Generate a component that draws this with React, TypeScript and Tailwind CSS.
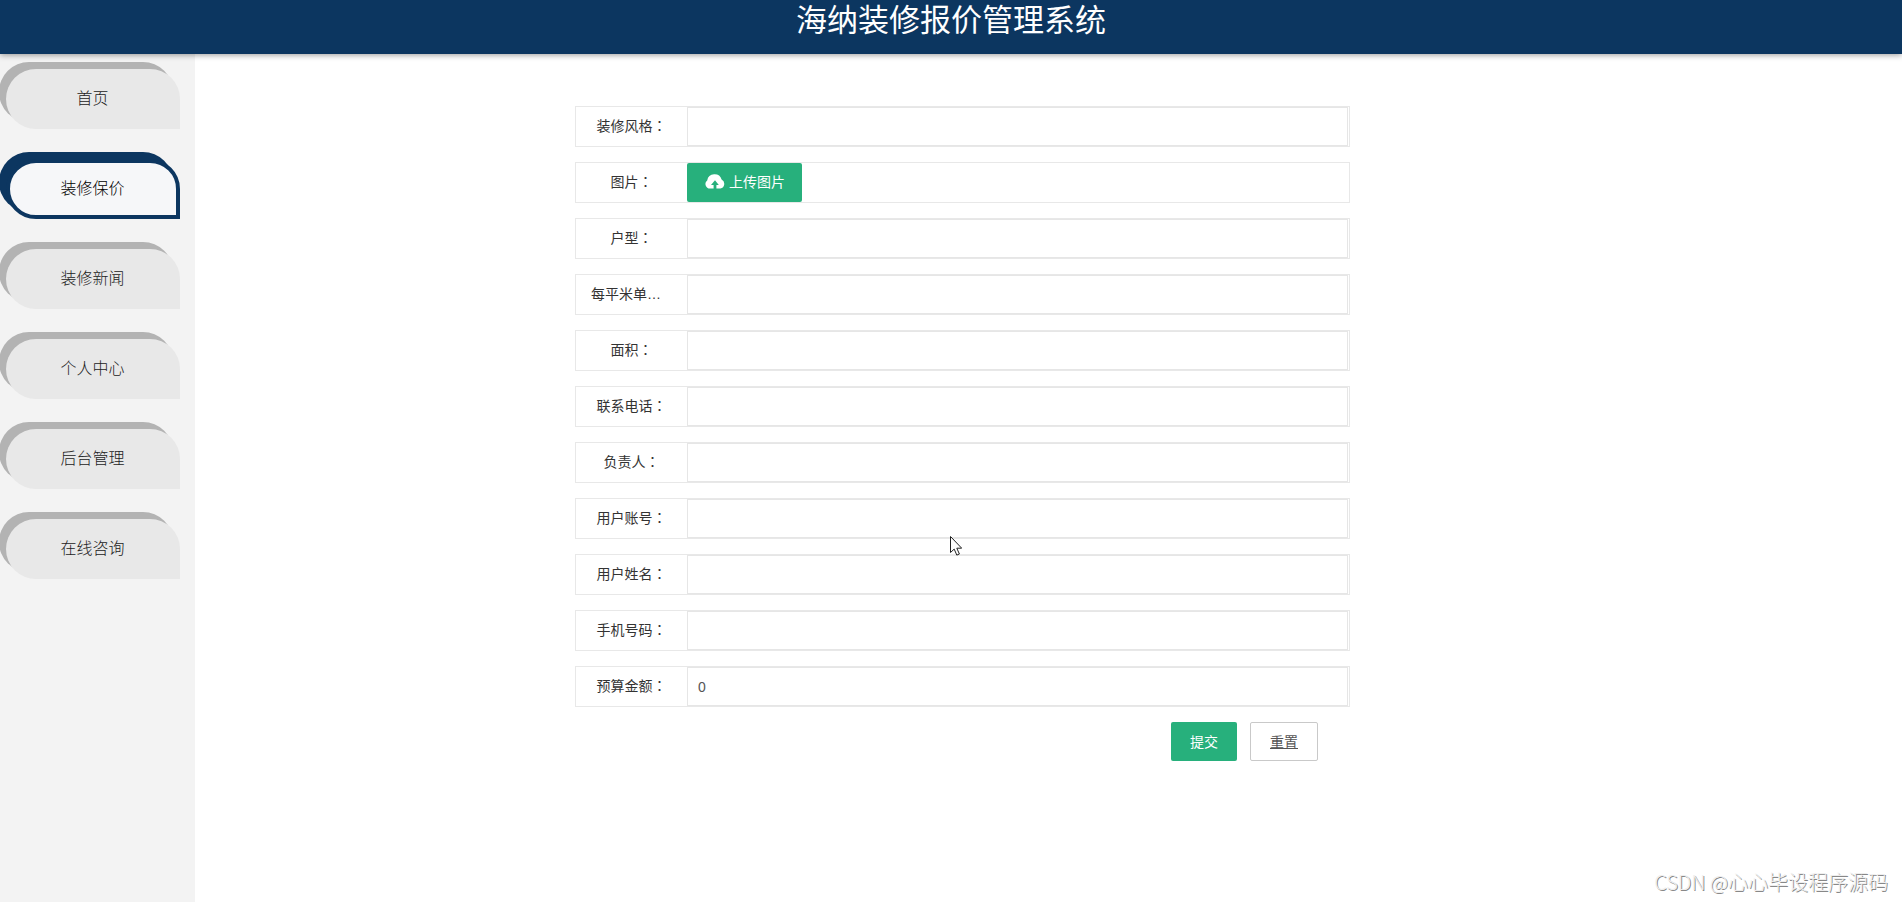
import React, { useState } from 'react';

interface MenuItem {
  id: number;
  title: string;
  href: string;
}

interface Field {
  name: string;
  label: string;
  upload?: boolean;
  value?: string;
}

const menu: MenuItem[] = [
  { id: 1, title: '首页', href: '#home' },
  { id: 2, title: '装修保价', href: '#quote' },
  { id: 3, title: '装修新闻', href: '#news' },
  { id: 4, title: '个人中心', href: '#center' },
  { id: 5, title: '后台管理', href: '#admin' },
  { id: 6, title: '在线咨询', href: '#chat' },
];

const fields: Field[] = [
  { name: 'fengge', label: '装修风格' },
  { name: 'tupian', label: '图片', upload: true },
  { name: 'huxing', label: '户型' },
  { name: 'danjia', label: '每平米单价' },
  { name: 'mianji', label: '面积' },
  { name: 'dianhua', label: '联系电话' },
  { name: 'fuzeren', label: '负责人' },
  { name: 'zhanghao', label: '用户账号' },
  { name: 'xingming', label: '用户姓名' },
  { name: 'shouji', label: '手机号码' },
  { name: 'yusuan', label: '预算金额', value: '0' },
];

function CloudIcon() {
  return (
    <svg className="w-5 h-4" viewBox="0 0 20 16" aria-hidden="true">
      <path
        fill="currentColor"
        d="M5 14.6A4.6 4.6 0 0 1 2.2 6.4 7.4 7.4 0 0 1 16.6 5.6 4.8 4.8 0 0 1 15.4 14.6h-4V11h2.4L10 6.2l-4 4.8h2.6v3.6z"
      />
    </svg>
  );
}

function SideMenu({ active, onSelect }: { active: number; onSelect: (id: number) => void }) {
  return (
    <nav className="w-[195px] shrink-0 bg-[#f3f3f3] pt-[15px] pl-1.5">
      <ul className="flex flex-col gap-[30px] font-light">
        {menu.map((item) => (
          <li key={item.id}>
            <a
              href={item.href}
              onClick={() => onSelect(item.id)}
              className={
                item.id === active
                  ? 'flex items-center justify-center w-[174px] h-[60px] pr-px rounded-[30px] rounded-br-none border-4 border-[#0c3660] bg-[#f6f7f9] shadow-[-7px_-7px_0_#0c3660] text-black'
                  : 'flex items-center justify-center w-[174px] h-[60px] pr-px rounded-[30px] rounded-br-none bg-[#e8e8e8] shadow-[-7px_-7px_0_#b3b3b3] text-[#222]'
              }
            >
              {item.title}
            </a>
          </li>
        ))}
      </ul>
    </nav>
  );
}

function FormRow({ field }: { field: Field }) {
  return (
    <div className="flex h-[41px] border border-[#e8e8e8]">
      <label
        htmlFor={field.name}
        className="w-[111px] shrink-0 px-[15px] leading-9 text-center truncate text-[#333]"
      >
        {field.label}
        <span className="font-['Noto_Sans_CJK_TC',sans-serif]">：</span>
      </label>
      {field.upload ? (
        <button
          id={field.name}
          type="button"
          className="flex items-center gap-1 pl-[18px] pr-[17px] pb-0.5 rounded-xs bg-[#27b07c] text-white"
        >
          <CloudIcon />
          上传图片
        </button>
      ) : (
        <input
          id={field.name}
          name={field.name}
          type="text"
          defaultValue={field.value}
          className="flex-1 min-w-0 mr-px px-[10px] border border-[#e6e6e6] text-[#555] outline-none"
        />
      )}
    </div>
  );
}

export default function App() {
  const [active, setActive] = useState(2);

  return (
    <div className="flex flex-col min-h-screen bg-white font-['Liberation_Sans','Noto_Sans_CJK_SC',sans-serif]">
      <header className="relative h-[54px] bg-[#0c3660] text-white text-center shadow-[0_1px_6px_rgba(0,0,0,0.4)]">
        <h1 className="text-[31px] leading-[42px]">海纳装修报价管理系统</h1>
      </header>
      <div className="flex flex-1">
        <SideMenu active={active} onSelect={setActive} />
        <main className="flex-1 pt-[52px]">
          <form className="w-[775px] ml-[380px] flex flex-col gap-[15px] text-sm">
            {fields.map((field) => (
              <FormRow key={field.name} field={field} />
            ))}
            <div className="flex justify-end gap-[13px] pr-8">
              <button type="submit" className="h-[39px] px-[19px] rounded-xs bg-[#27b07c] text-white">
                提交
              </button>
              <button
                type="reset"
                className="h-[39px] px-[19px] rounded-xs border border-[#c9c9c9] bg-white text-[#555] underline"
              >
                重置
              </button>
            </div>
          </form>
        </main>
      </div>
      <svg className="absolute left-[950px] top-[536px] w-3 h-5" viewBox="0 0 12 20" aria-hidden="true">
        <path d="M.5.5v16l3.7-3.4 2.6 6 2.6-1.1-2.6-5.8h4.9z" fill="#fff" stroke="#222" />
      </svg>
      <p className="absolute right-[14px] bottom-1.5 text-xl leading-7 font-light font-['Noto_Sans_CJK_SC',sans-serif] text-[#eee] [text-shadow:1px_1px_0_#888]">
        CSDN @心心毕设程序源码
      </p>
    </div>
  );
}
